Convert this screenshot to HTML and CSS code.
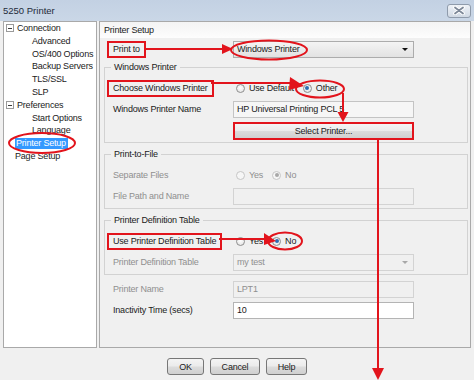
FILE: index.html
```html
<!DOCTYPE html>
<html>
<head>
<meta charset="utf-8">
<link rel="stylesheet" href="styles.css">
</head>
<body>
<div class="window">
  <div class="titlebar">
    <span class="title">5250 Printer</span>
    <span class="close"><svg width="12" height="9" viewBox="0 0 12 9"><path d="M2 1.5L10 7.5M10 1.5L2 7.5" stroke="#fff" stroke-width="3.6" stroke-linecap="round"/><path d="M2 1.5L10 7.5M10 1.5L2 7.5" stroke="#7d8898" stroke-width="1.8" stroke-linecap="round"/></svg></span>
  </div>
  <div class="main">
    <div class="tree">
      <div class="node top"><span class="expander"></span>Connection</div>
      <div class="node child">Advanced</div>
      <div class="node child">OS/400 Options</div>
      <div class="node child">Backup Servers</div>
      <div class="node child">TLS/SSL</div>
      <div class="node child">SLP</div>
      <div class="node top"><span class="expander"></span>Preferences</div>
      <div class="node child">Start Options</div>
      <div class="node child">Language</div>
      <div class="node leaf"><span class="sel">Printer Setup</span></div>
      <div class="node leaf">Page Setup</div>
    </div>
    <div class="splitter"></div>
    <div class="panel">
      <div class="panel-header">Printer Setup</div>
      <div class="form">
        <div class="row first">
          <div class="label"><span class="mark">Print to</span></div>
          <div class="field combo"><span>Windows Printer</span><span class="arrow"></span></div>
        </div>
        <fieldset class="group g-first">
          <legend>Windows Printer</legend>
          <div class="row">
            <div class="label"><span class="mark">Choose Windows Printer</span></div>
            <div class="radios">
              <span class="opt"><span class="radio"></span>Use Default</span>
              <span class="opt"><span class="radio on"></span>Other</span>
            </div>
          </div>
          <div class="row">
            <div class="label">Windows Printer Name</div>
            <div class="field readonly">HP Universal Printing PCL 5</div>
          </div>
          <div class="row">
            <div class="label"></div>
            <button class="btn select">Select Printer...</button>
          </div>
        </fieldset>
        <fieldset class="group">
          <legend>Print-to-File</legend>
          <div class="row disabled">
            <div class="label">Separate Files</div>
            <div class="radios">
              <span class="opt"><span class="radio"></span>Yes</span>
              <span class="opt"><span class="radio on"></span>No</span>
            </div>
          </div>
          <div class="row disabled">
            <div class="label">File Path and Name</div>
            <div class="field"></div>
          </div>
        </fieldset>
        <fieldset class="group">
          <legend>Printer Definition Table</legend>
          <div class="row">
            <div class="label"><span class="mark">Use Printer Definition Table</span></div>
            <div class="radios">
              <span class="opt"><span class="radio"></span>Yes</span>
              <span class="opt"><span class="radio on"></span>No</span>
            </div>
          </div>
          <div class="row disabled">
            <div class="label">Printer Definition Table</div>
            <div class="field combo"><span>my test</span><span class="arrow"></span></div>
          </div>
        </fieldset>
        <div class="row disabled after-group">
          <div class="label">Printer Name</div>
          <div class="field">LPT1</div>
        </div>
        <div class="row">
          <div class="label">Inactivity Time (secs)</div>
          <div class="field white">10</div>
        </div>
      </div>
    </div>
  </div>
  <div class="footer">
    <button class="btn ok">OK</button>
    <button class="btn cancel">Cancel</button>
    <button class="btn help">Help</button>
  </div>
  <svg class="annotations" width="474" height="380" viewBox="0 0 474 380">
    <g fill="none" stroke="#e2141c" stroke-width="2">
      <ellipse cx="42" cy="143" rx="33" ry="10"/>
      <ellipse cx="269" cy="50" rx="38" ry="9.5"/>
      <ellipse cx="320" cy="89" rx="24" ry="8.5"/>
      <ellipse cx="285" cy="241" rx="17" ry="8.5"/>
      <line x1="145" y1="49" x2="224" y2="49"/>
      <line x1="211" y1="83" x2="292" y2="83"/>
      <line x1="343" y1="93" x2="343" y2="113"/>
      <line x1="378" y1="140" x2="378" y2="369"/>
      <line x1="219" y1="239" x2="265" y2="239"/>
    </g>
    <g fill="#e2141c">
      <polygon points="222,44 233,49 222,54"/>
      <polygon points="290,77 304,86 289,90"/>
      <polygon points="337.5,112 348.5,112 343,122"/>
      <polygon points="372,368 384,368 378,380"/>
      <polygon points="264,233 276,241 264,245"/>
    </g>
  </svg>
</div>
</body>
</html>
```

FILE: styles.css
```css
* { box-sizing: border-box; }
html, body { margin: 0; padding: 0; }
body {
  width: 474px;
  height: 380px;
  overflow: hidden;
  background: #f0f0f0;
  font-family: "Liberation Sans", Arial, sans-serif;
  font-size: 9px;
  letter-spacing: -0.2px;
  color: #1b1b1b;
}
.window {
  position: relative;
  width: 474px;
  height: 380px;
  background: #f0f0f0;
}
.titlebar {
  height: 21px;
  display: flex;
  align-items: center;
  justify-content: space-between;
  padding: 0 3px;
  background: linear-gradient(#c3d1e3, #cad7e7);
}
.title {
  font-size: 9.5px;
  letter-spacing: 0;
  color: #1f2b3a;
}
.close {
  width: 24px;
  height: 14px;
  border: 1px solid #8f9bab;
  border-radius: 3px;
  background: linear-gradient(#eef2f7, #d0d9e4);
  display: flex;
  align-items: center;
  justify-content: center;
}
.main {
  display: flex;
  height: 327px;
  padding-left: 3px;
}
.tree {
  width: 94px;
  flex: none;
  background: #fff;
  border: 1px solid #a9a9a9;
}
.node {
  height: 12.8px;
  line-height: 12.8px;
  white-space: nowrap;
  display: flex;
  align-items: center;
}
.node.top { padding-left: 2px; }
.node.child { padding-left: 28px; }
.node.leaf { padding-left: 11px; }
.expander {
  width: 8px;
  height: 8px;
  border: 1px solid #9a9a9a;
  margin-right: 3px;
  position: relative;
  background: #fff;
}
.expander::after {
  content: "";
  position: absolute;
  left: 1px;
  top: 2.5px;
  width: 4px;
  height: 1px;
  background: #3c3c3c;
}
.sel {
  background: #3399ff;
  color: #fff;
  padding: 0 2px 0 1px;
  line-height: 11px;
}
.splitter { width: 2px; flex: none; }
.panel {
  width: 372px;
  flex: none;
  border: 1px solid #a9a9a9;
}
.panel-header {
  height: 16px;
  line-height: 17px;
  padding-left: 4px;
  background: linear-gradient(#f4f4f4, #fdfdfd);
}
.form { padding: 0 2px 0 4px; }
.row {
  display: flex;
  align-items: center;
  height: 18px;
}
.form > .row { padding-left: 9px; }
.form > .row.first { margin-top: 2px; }
.form > .row.after-group { margin-top: 5px; }
.form > .row + .row { margin-top: 3px; }
.label {
  width: 120px;
  flex: none;
  white-space: nowrap;
}
.mark {
  display: inline-block;
  border: 2px solid #e2141c;
  padding: 0 4px;
  margin-left: -6px;
  line-height: 13px;
}
.group {
  margin: 5px 0 0;
  padding: 0 0 3px 8px;
  border: 1px solid #d2d2d2;
  min-inline-size: 0;
}
.group.g-first { margin-top: 3px; }
.group legend {
  padding: 0 3px;
  margin-left: -2px;
  line-height: 12px;
}
.group .row { margin-top: 3px; }
.group .row:first-of-type { margin-top: 6px; }
.field {
  width: 181px;
  height: 17px;
  flex: none;
  border: 1px solid #c6c6c6;
  background: #f0f0f0;
  padding: 0 3px;
  line-height: 15px;
  white-space: nowrap;
}
.field.readonly { background: #f6f6f6; border-color: #c4c4c4; }
.field.white { background: #fff; border-color: #b4b4b4; }
.disabled { color: #8f8f8f; }
.disabled .field { border-color: #d3d3d3; background: #f0f0f0; }
.combo {
  display: flex;
  align-items: center;
  justify-content: space-between;
  background: linear-gradient(#f4f4f4, #e2e2e2);
  border-color: #acacac;
}
.arrow {
  width: 0;
  height: 0;
  border-left: 3.5px solid transparent;
  border-right: 3.5px solid transparent;
  border-top: 3.5px solid #111;
  margin-right: 2px;
}
.disabled .combo { background: #f0f0f0; }
.disabled .arrow { border-top-color: #a8a8a8; }
.radios {
  display: flex;
  align-items: center;
  padding-left: 3px;
  white-space: nowrap;
}
.opt {
  display: flex;
  align-items: center;
  margin-right: 9px;
}
.radio {
  width: 9px;
  height: 9px;
  border-radius: 50%;
  border: 1px solid #8e8e8e;
  background: radial-gradient(circle at 50% 40%, #ffffff, #dedede);
  margin-right: 4px;
  display: flex;
  align-items: center;
  justify-content: center;
}
.radio.on::after {
  content: "";
  width: 4px;
  height: 4px;
  border-radius: 50%;
  background: #2c6db3;
}
.disabled .radio { border-color: #c6c6c6; background: #f6f6f6; }
.disabled .radio.on::after { background: #a8a8a8; }
.btn {
  height: 17px;
  border: 1px solid #777;
  border-radius: 3px;
  background: linear-gradient(#f4f4f4 0%, #ebebeb 48%, #dcdcdc 52%, #d0d0d0 100%);
  font: inherit;
  letter-spacing: -0.2px;
  color: #1b1b1b;
  padding: 0;
}
.btn.select {
  width: 181px;
  height: 18px;
  border: 2px solid #e2141c;
  border-radius: 0;
  margin-top: 1px;
}
.footer {
  display: flex;
  justify-content: center;
  gap: 6px;
  padding-top: 10px;
}
.btn.ok { width: 37px; }
.btn.cancel { width: 50px; }
.btn.help { width: 41px; }
.annotations {
  position: absolute;
  left: 0;
  top: 0;
  pointer-events: none;
}
```
